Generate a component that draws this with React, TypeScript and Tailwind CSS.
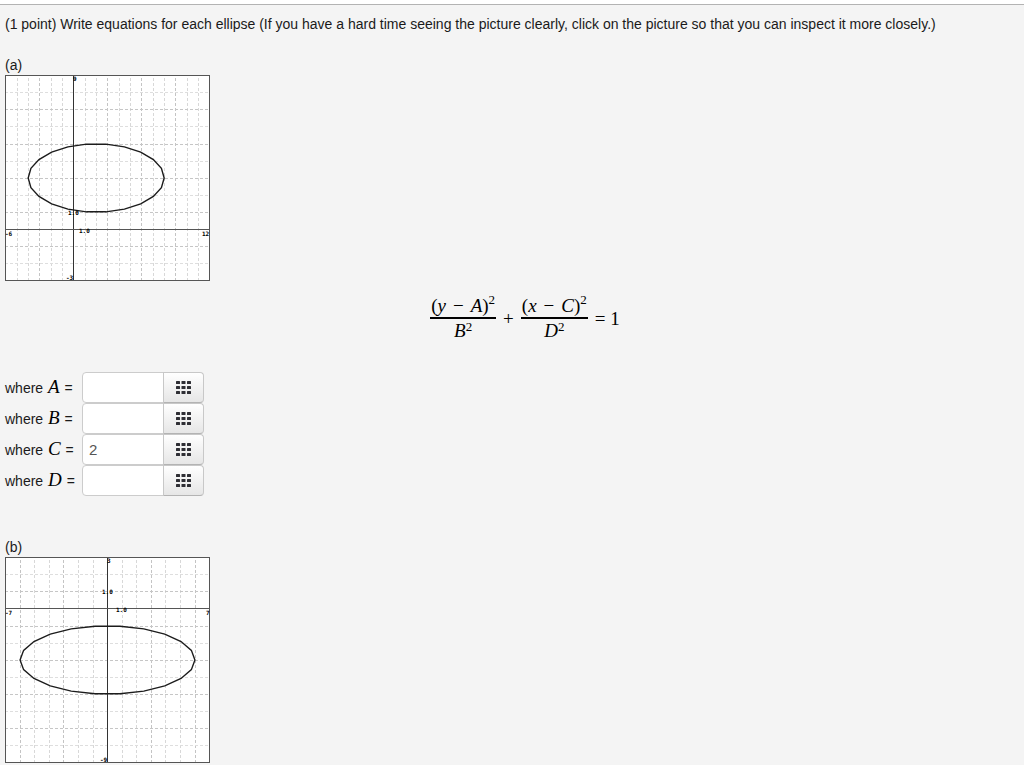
import { useState } from 'react';

interface Range {
  min: number;
  max: number;
}

interface GraphProps {
  title: string;
  x: Range;
  y: Range;
  center: [number, number];
  radius: [number, number];
  labels: { text: string; left: number; top: number }[];
}

const WIDTH = 205;
const HEIGHT = 206;
const SEGMENTS = 22;

function EllipseGraph({ title, x, y, center, radius, labels }: GraphProps) {
  const toX = (v: number) => ((v - x.min) / (x.max - x.min)) * (WIDTH - 1);
  const toY = (v: number) => ((y.max - v) / (y.max - y.min)) * (HEIGHT - 1);
  const snap = (v: number) => Math.round(v + 0.2) + 0.5;

  const columns = Array.from({ length: x.max - x.min - 1 }, (_, i) => x.min + i + 1);
  const rows = Array.from({ length: y.max - y.min - 1 }, (_, i) => y.min + i + 1);
  const points = Array.from({ length: SEGMENTS }, (_, i) => {
    const t = (i / SEGMENTS) * 2 * Math.PI;
    return `${toX(center[0] + radius[0] * Math.cos(t)) + 0.5},${toY(center[1] + radius[1] * Math.sin(t)) + 0.5}`;
  }).join(' ');

  return (
    <svg viewBox={`0 0 ${WIDTH} ${HEIGHT}`} role="img" aria-label={title} className="block h-[206px] w-[205px] bg-white">
      {columns.map(v => (
        <line key={v} x1={snap(toX(v))} x2={snap(toX(v))} y1="3" y2={HEIGHT} stroke={v % 3 === 0 ? '#c4c4c4' : '#d8d8d8'} strokeDasharray="3 2" />
      ))}
      {rows.map(v => (
        <line key={v} y1={snap(toY(v))} y2={snap(toY(v))} x1="0" x2={WIDTH} stroke={v % 2 === 0 ? '#dedede' : '#c6c6c6'} strokeDasharray="3 2" />
      ))}
      <line x1={Math.round(toX(0)) + 0.5} x2={Math.round(toX(0)) + 0.5} y1="0" y2={HEIGHT} stroke="#333" />
      <line y1={snap(toY(0))} y2={snap(toY(0))} x1="0" x2={WIDTH} stroke="#555" />
      <polygon points={points} fill="none" stroke="#1c1c1c" strokeWidth="1.4" />
      <rect x="0.5" y="0.5" width={WIDTH - 1} height={HEIGHT - 1} fill="none" stroke="#555" />
      {labels.map(label => (
        <text key={label.text + label.left} x={label.left} y={label.top} className="font-['DejaVu_Sans_Mono',monospace] text-[6px] font-bold">
          {label.text}
        </text>
      ))}
    </svg>
  );
}

function Fraction({ variable, shift, divisor }: { variable: string; shift: string; divisor: string }) {
  return (
    <span className="flex flex-col items-center">
      <span className="flex h-[23px] items-center border-b-2 border-black px-px pb-[2px]">
        (<i>{variable}</i><span className="mx-[7px]">−</span><i>{shift}</i>)<sup className="top-[-6px] text-[13px]">2</sup>
      </span>
      <span className="flex h-[23px] items-center pt-px">
        <i>{divisor}</i><sup className="top-[-4px] text-[13px]">2</sup>
      </span>
    </span>
  );
}

function KeypadIcon() {
  return (
    <svg viewBox="0 0 15 13" className="h-[13px] w-[15px]" fill="#2f2f35" aria-hidden="true">
      {[0, 5, 10].map(cy => [0, 5.5, 11].map(cx => (
        <rect key={`${cx}-${cy}`} x={cx} y={cy} width="4" height="3" rx="0.5" />
      )))}
    </svg>
  );
}

export default function App() {
  const [answers, setAnswers] = useState<Record<string, string>>({ A: '', B: '', C: '2', D: '' });

  return (
    <div className="min-h-screen bg-white pt-1 font-['Liberation_Sans',Arial,sans-serif] text-[14px] leading-5 text-[#1a1a1a]">
      <main className="min-h-[761px] border-t border-[#b3b3b3] bg-[#f4f4f4] px-[5px] pt-[9px]">
        <p>
          (1 point) Write equations for each ellipse (If you have a hard time seeing the picture clearly, click on the picture so that you can inspect it more closely.)
        </p>

        <section className="mt-[21px]">
          <h2>(a)</h2>
          <EllipseGraph
            title="Graph of ellipse (a)"
            x={{ min: -6, max: 12 }}
            y={{ min: -3, max: 9 }}
            center={[2, 3]}
            radius={[6, 2]}
            labels={[
              { text: '9', left: 68, top: 6 },
              { text: '1.0', left: 63, top: 140 },
              { text: '1.0', left: 74, top: 158 },
              { text: '-6', left: 0, top: 161 },
              { text: '12', left: 197, top: 161 },
              { text: '-3', left: 61, top: 205 },
            ]}
          />

          <div className="mt-[15px] flex items-center justify-center pl-[26px] font-['Liberation_Serif',serif] text-[19px] leading-5 text-black">
            <Fraction variable="y" shift="A" divisor="B" />
            <span className="mx-[7px]">+</span>
            <Fraction variable="x" shift="C" divisor="D" />
            <span className="ml-[7px]">= 1</span>
          </div>

          <div className="mt-[30px]">
            {Object.keys(answers).map(name => (
              <div key={name} className="flex h-[31px] items-center">
                <label htmlFor={`answer-${name}`} className="w-[77px]">
                  where <i className="mx-px font-['Liberation_Serif',serif] text-[19px] text-black">{name}</i> =
                </label>
                <input
                  id={`answer-${name}`}
                  type="text"
                  value={answers[name]}
                  onChange={e => setAnswers({ ...answers, [name]: e.target.value })}
                  className="h-[31px] w-[82px] rounded-l border border-[#ccc] bg-white px-1.5 text-[15px] text-[#555] outline-none focus:border-blue-400"
                />
                <button
                  type="button"
                  aria-label={`Open equation editor for ${name}`}
                  className="-ml-px flex h-[31px] w-[41px] items-center justify-center rounded-r border border-[#c8c8c8] border-b-[#b3b3b3] bg-linear-to-b from-white to-[#e6e6e6]"
                >
                  <KeypadIcon />
                </button>
              </div>
            ))}
          </div>
        </section>

        <section className="mt-[41px]">
          <h2>(b)</h2>
          <EllipseGraph
            title="Graph of ellipse (b)"
            x={{ min: -7, max: 7 }}
            y={{ min: -9, max: 3 }}
            center={[0, -3]}
            radius={[6, 2]}
            labels={[
              { text: '3', left: 102, top: 6 },
              { text: '1.0', left: 97, top: 37 },
              { text: '1.0', left: 111, top: 55 },
              { text: '-7', left: 0, top: 58 },
              { text: '7', left: 201, top: 58 },
              { text: '-9', left: 95, top: 205 },
            ]}
          />
        </section>
      </main>
    </div>
  );
}
